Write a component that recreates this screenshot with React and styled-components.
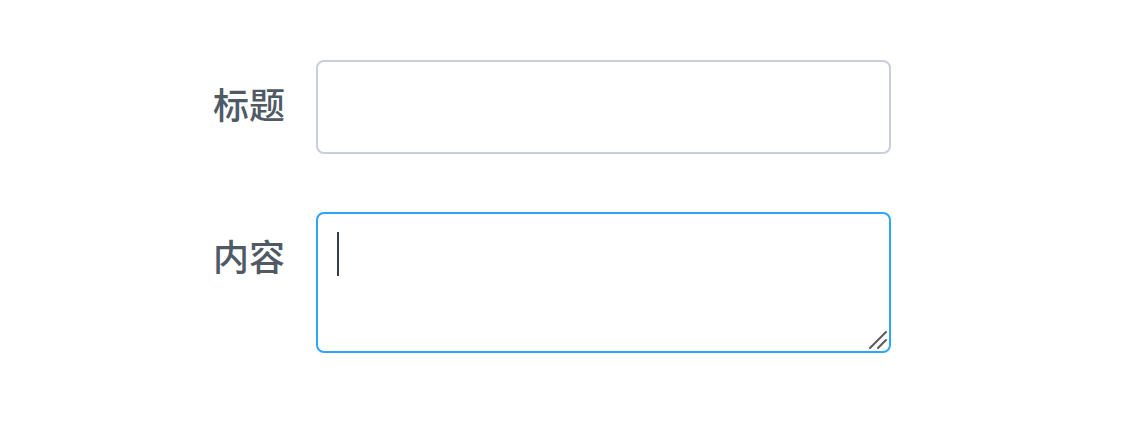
import React from "react";
import styled, { createGlobalStyle } from "styled-components";

const GlobalStyle = createGlobalStyle`
  html, body { margin: 0; padding: 0; background: #ffffff; }
  body { font-family: "Noto Sans CJK SC", "Noto Sans", sans-serif; }
`;

const Page = styled.div`
  width: 1140px;
  height: 426px;
  box-sizing: border-box;
  padding: 60px 0 0 186px;
`;

const Form = styled.form`
  display: flex;
  flex-direction: column;
  gap: 58px;
  width: 705px;
`;

const Row = styled.div`
  display: flex;
  align-items: flex-start;
`;

const Label = styled.label`
  flex: 0 0 130px;
  box-sizing: border-box;
  padding-right: 31px;
  text-align: right;
  font-family: "Noto Sans CJK SC", "Noto Sans", sans-serif;
  font-size: 36px;
  font-weight: 500;
  line-height: 87px;
  color: #4f5a66;
  white-space: nowrap;
`;

const fieldBase = `
  box-sizing: border-box;
  width: 575px;
  border: 2px solid #c6cfdb;
  border-radius: 8px;
  background: #ffffff;
  outline: none;
  font-family: "Noto Sans CJK SC", "Noto Sans", sans-serif;
  font-size: 30px;
  color: #36404a;
  caret-color: #36404a;
  margin: 0;
  &:focus { border-color: #2ea4fb; }
`;

const TextInput = styled.input`
  ${fieldBase}
  height: 94px;
  padding: 0 19px;
`;

const FieldWrap = styled.div`
  position: relative;
  width: 575px;
`;

const TextArea = styled.textarea`
  ${fieldBase}
  height: 141px;
  padding: 16px 19px;
  line-height: 1.5;
  resize: none;
  display: block;
  border-color: ${(p) => (p.$active ? "#2ea4fb" : "#c6cfdb")};
`;

const Caret = styled.span`
  position: absolute;
  left: 21px;
  top: 20px;
  width: 2px;
  height: 44px;
  background: #36404a;
  pointer-events: none;
`;

const Grip = styled.svg`
  position: absolute;
  right: 4px;
  bottom: 4px;
  width: 18px;
  height: 18px;
  pointer-events: none;
`;

export default function App() {
  return (
    <>
      <GlobalStyle />
      <Page>
        <Form onSubmit={(e) => e.preventDefault()}>
          <Row>
            <Label htmlFor="title">标题</Label>
            <TextInput id="title" type="text" />
          </Row>
          <Row>
            <Label htmlFor="content">内容</Label>
            <FieldWrap>
              <TextArea id="content" $active autoFocus />
              <Caret />
              <Grip viewBox="0 0 18 18">
                <line x1="1" y1="17" x2="17" y2="1" stroke="#5a5a5a" strokeWidth="2" strokeLinecap="round" />
                <line x1="9" y1="17" x2="17" y2="9" stroke="#5a5a5a" strokeWidth="2" strokeLinecap="round" />
              </Grip>
            </FieldWrap>
          </Row>
        </Form>
      </Page>
    </>
  );
}
